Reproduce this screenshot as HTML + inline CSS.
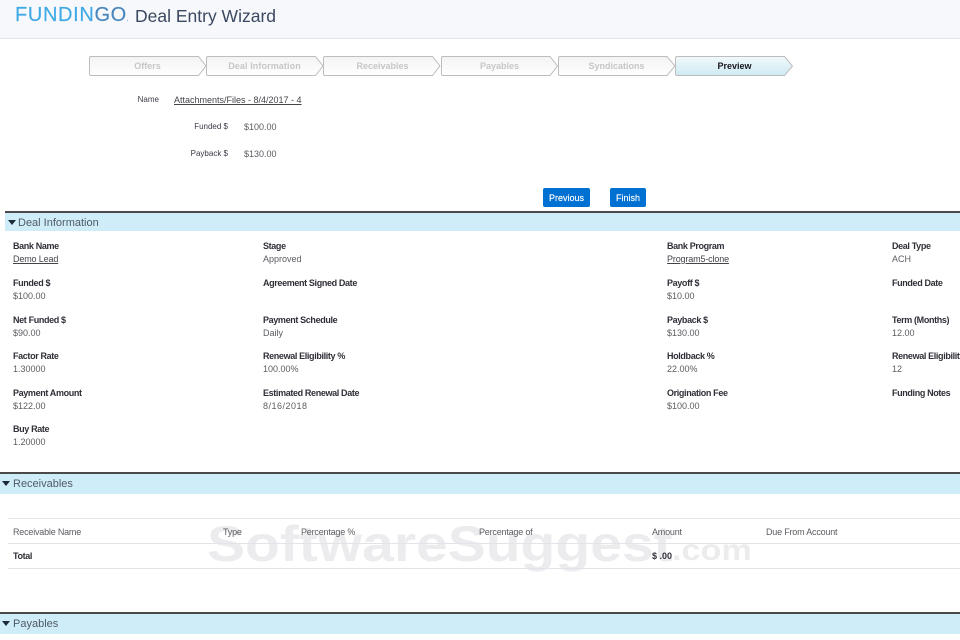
<!DOCTYPE html>
<html><head><meta charset="utf-8">
<style>
html,body{margin:0;padding:0;background:#fff;width:960px;height:640px;overflow:hidden}
body{position:relative;font-family:"Liberation Sans",sans-serif;font-size:9px;color:#3e3e3c}
.t{position:absolute;white-space:nowrap;line-height:12px}
.l{font-weight:bold;color:#2f2f38;letter-spacing:-.36px}
.v{color:#5c5c62}
.a{color:#44444a;text-decoration:underline;letter-spacing:-.15px}
.th{color:#5c5c62;letter-spacing:-.2px}
.band{position:absolute;height:20px;background:#cfedf8;border-top:2px solid #4a4a4a;right:0;font-size:11px;color:#505a66;line-height:20px}
.tri{position:absolute;top:7px;width:0;height:0;border-left:4px solid transparent;border-right:4px solid transparent;border-top:5px solid #1c2b3a}
.btn{position:absolute;top:188px;height:19px;background:#0070d2;border-radius:2px;color:#fff;font-size:9px;line-height:20px;text-align:center;-webkit-text-stroke:.15px #fff}
.hl{position:absolute;left:8px;right:0;height:1px;background:#e2e4ea}
.wm{position:absolute;font-weight:bold;color:#ececee;white-space:nowrap;transform:scaleX(1.14);transform-origin:0 0}
</style></head><body>
<div style="position:absolute;left:0;top:0;width:960px;height:38px;background:#f6f8fb;border-bottom:1px solid #dfe5ec"></div>
<div class="t" style="left:15px;top:4px;font-size:20px;line-height:22px;letter-spacing:.65px;color:#3fa9e6;-webkit-text-stroke:.15px">FUNDIN<span style="color:#4a86bd">GO</span><span style="font-size:6px;color:#4a86bd">.</span></div>
<div class="t" style="left:135px;top:5px;font-size:17.500px;line-height:22px;color:#3a4860">Deal Entry Wizard</div>

<svg width="960" height="40" style="position:absolute;left:0;top:46px" xmlns="http://www.w3.org/2000/svg">
<defs>
<linearGradient id="g" x1="0" y1="0" x2="0" y2="1"><stop offset="0" stop-color="#f3f3f3"/><stop offset="1" stop-color="#fff"/></linearGradient>
<linearGradient id="b" x1="0" y1="0" x2="0" y2="1"><stop offset="0" stop-color="#f1f9fb"/><stop offset="1" stop-color="#cfeaf3"/></linearGradient>
</defs>
<g stroke="#bdbdbd" stroke-width="1">
<path d="M91 10.5H198.5L206 20L198.5 29.5H91Q89.500 29.500 89.500 28V12Q89.500 10.500 91 10.500Z" fill="url(#g)"/>
<path d="M208 10.5H315.5L323 20L315.5 29.5H208Q206.500 29.500 206.500 28V12Q206.500 10.500 208 10.500Z" fill="url(#g)"/>
<path d="M325 10.5H432.500L440 20L432.500 29.5H325Q323.500 29.500 323.500 28V12Q323.500 10.500 325 10.500Z" fill="url(#g)"/>
<path d="M443 10.5H550L557.500 20L550 29.5H443Q441.500 29.500 441.500 28V12Q441.500 10.500 443 10.500Z" fill="url(#g)"/>
<path d="M560 10.5H667L675 20L667 29.5H560Q558.500 29.500 558.500 28V12Q558.500 10.500 560 10.500Z" fill="url(#g)"/>
<path d="M677 10.5H784.500L792.500 20L784.500 29.5H677Q675.500 29.500 675.500 28V12Q675.500 10.500 677 10.500Z" fill="url(#b)"/>
</g>
</svg>
<div class="t" style="left:89px;width:117px;top:60px;text-align:center;font-weight:bold;color:#c6c6c6">Offers</div>
<div class="t" style="left:206px;width:117px;top:60px;text-align:center;font-weight:bold;color:#c6c6c6;letter-spacing:.1px">Deal Information</div>
<div class="t" style="left:324px;width:117px;top:60px;text-align:center;font-weight:bold;color:#c6c6c6">Receivables</div>
<div class="t" style="left:441px;width:117px;top:60px;text-align:center;font-weight:bold;color:#c6c6c6">Payables</div>
<div class="t" style="left:558px;width:117px;top:60px;text-align:center;font-weight:bold;color:#c6c6c6">Syndications</div>
<div class="t" style="left:676px;width:117px;top:60px;text-align:center;font-weight:bold;color:#16161c">Preview</div>

<div class="t" style="right:801px;top:94px;font-size:8px;color:#3a3a48">Name</div>
<div class="t a" style="left:174px;top:94px;letter-spacing:0">Attachments/Files - 8/4/2017 - 4</div>
<div class="t" style="right:732px;top:121px;font-size:8px;color:#3a3a48">Funded $</div>
<div class="t v" style="left:244px;top:121px">$100.00</div>
<div class="t" style="right:732px;top:148px;font-size:8px;color:#3a3a48">Payback $</div>
<div class="t v" style="left:244px;top:148px">$130.00</div>

<div class="btn" style="left:543px;width:47px">Previous</div>
<div class="btn" style="left:610px;width:36px">Finish</div>

<div class="band" style="left:5px;top:211px;height:18px;line-height:20px"><span class="tri" style="left:3px;top:7px"></span><span style="position:absolute;left:13px;top:0;white-space:nowrap">Deal Information</span></div>

<div class="t l" style="left:13px;top:240px">Bank Name</div><div class="t a" style="left:13px;top:253px">Demo Lead</div>
<div class="t l" style="left:263px;top:240px">Stage</div><div class="t v" style="left:263px;top:253px">Approved</div>
<div class="t l" style="left:667px;top:240px">Bank Program</div><div class="t a" style="left:667px;top:253px">Program5-clone</div>
<div class="t l" style="left:892px;top:240px">Deal Type</div><div class="t v" style="left:892px;top:253px">ACH</div>

<div class="t l" style="left:13px;top:277px">Funded $</div><div class="t v" style="left:13px;top:290px">$100.00</div>
<div class="t l" style="left:263px;top:277px">Agreement Signed Date</div>
<div class="t l" style="left:667px;top:277px">Payoff $</div><div class="t v" style="left:667px;top:290px">$10.00</div>
<div class="t l" style="left:892px;top:277px">Funded Date</div>

<div class="t l" style="left:13px;top:314px">Net Funded $</div><div class="t v" style="left:13px;top:327px">$90.00</div>
<div class="t l" style="left:263px;top:314px">Payment Schedule</div><div class="t v" style="left:263px;top:327px">Daily</div>
<div class="t l" style="left:667px;top:314px">Payback $</div><div class="t v" style="left:667px;top:327px">$130.00</div>
<div class="t l" style="left:892px;top:314px">Term (Months)</div><div class="t v" style="left:892px;top:327px">12.00</div>

<div class="t l" style="left:13px;top:350px">Factor Rate</div><div class="t v" style="left:13px;top:363px">1.30000</div>
<div class="t l" style="left:263px;top:350px">Renewal Eligibility %</div><div class="t v" style="left:263px;top:363px">100.00%</div>
<div class="t l" style="left:667px;top:350px">Holdback %</div><div class="t v" style="left:667px;top:363px">22.00%</div>
<div class="t l" style="left:892px;top:350px">Renewal Eligibility</div><div class="t v" style="left:892px;top:363px">12</div>

<div class="t l" style="left:13px;top:387px">Payment Amount</div><div class="t v" style="left:13px;top:400px">$122.00</div>
<div class="t l" style="left:263px;top:387px">Estimated Renewal Date</div><div class="t v" style="left:263px;top:400px;letter-spacing:.5px">8/16/2018</div>
<div class="t l" style="left:667px;top:387px">Origination Fee</div><div class="t v" style="left:667px;top:400px">$100.00</div>
<div class="t l" style="left:892px;top:387px">Funding Notes</div>

<div class="t l" style="left:13px;top:423px">Buy Rate</div><div class="t v" style="left:13px;top:436px">1.20000</div>

<div class="band" style="left:0;top:472px"><span class="tri" style="left:2px"></span><span style="position:absolute;left:13px;top:0;white-space:nowrap">Receivables</span></div>

<div class="wm" style="left:207px;top:514px;font-size:50px;line-height:60px">SoftwareSuggest</div>
<div class="wm" style="left:672px;top:533px;font-size:30px;line-height:36px">.com</div>

<div class="hl" style="top:518px"></div>
<div class="hl" style="top:543px"></div>
<div class="hl" style="top:568px"></div>
<div class="t th" style="left:13px;top:526px">Receivable Name</div>
<div class="t th" style="left:223px;top:526px">Type</div>
<div class="t th" style="left:301px;top:526px">Percentage %</div>
<div class="t th" style="left:479px;top:526px">Percentage of</div>
<div class="t th" style="left:652px;top:526px">Amount</div>
<div class="t th" style="left:766px;top:526px">Due From Account</div>
<div class="t l" style="left:13px;top:550px">Total</div>
<div class="t l" style="left:652px;top:550px;letter-spacing:0">$ .00</div>

<div class="band" style="left:0;top:612px"><span class="tri" style="left:2px"></span><span style="position:absolute;left:13px;top:0;white-space:nowrap">Payables</span></div>
</body></html>
